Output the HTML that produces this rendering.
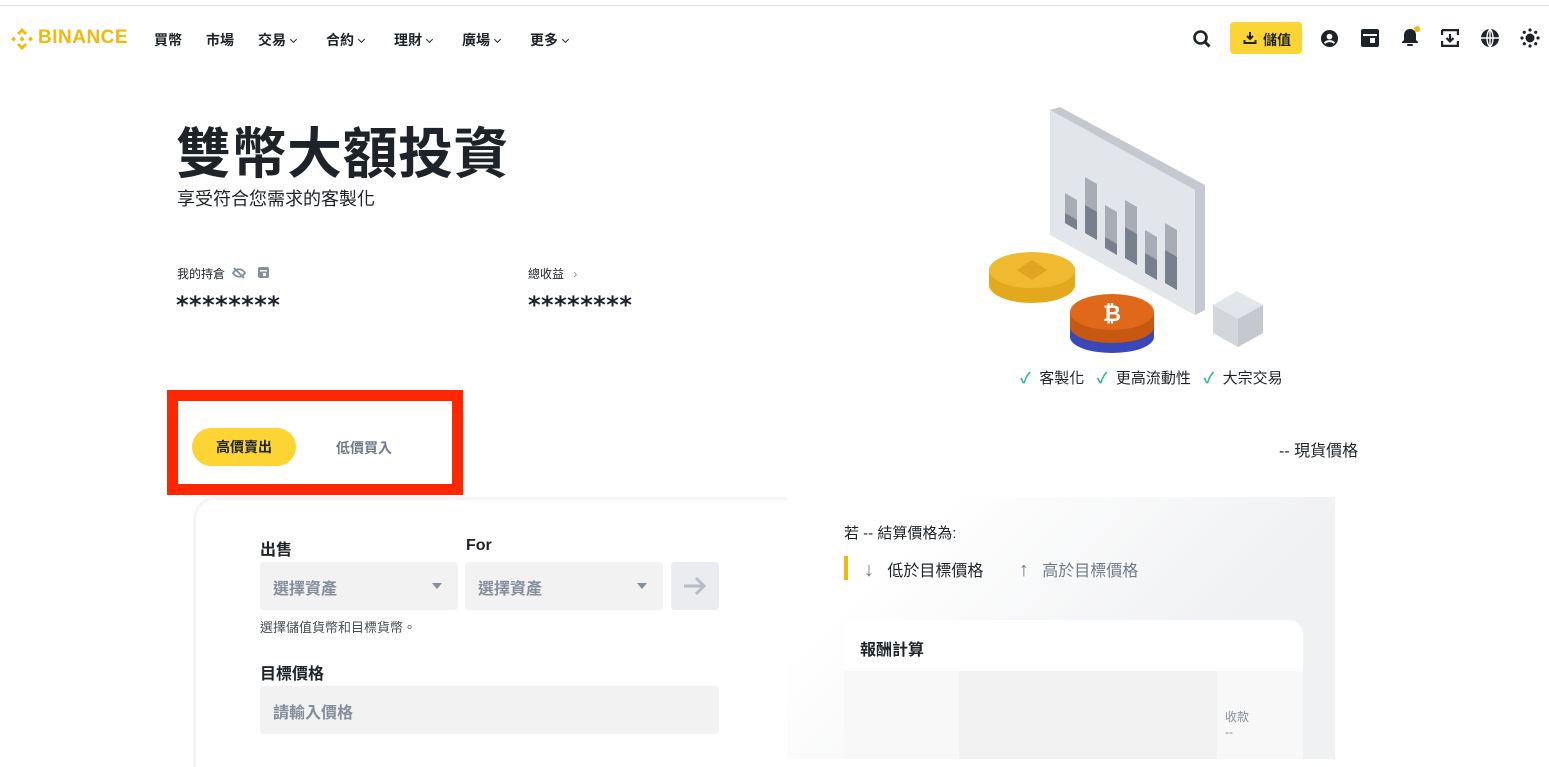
<!DOCTYPE html>
<html><head><meta charset="utf-8"><style>
*{margin:0;padding:0;box-sizing:border-box}
body{width:1549px;height:759px;overflow:hidden;background:#fff;font-family:"Liberation Sans","Noto Sans CJK TC",sans-serif;color:#1e2329;position:relative}
.a{position:absolute}
.nav span{position:absolute;top:30px;font-size:14px;font-weight:600;color:#1e2329}
.chev{display:inline-block;width:5px;height:5px;border-right:1.6px solid #1e2329;border-bottom:1.6px solid #1e2329;transform:rotate(45deg);margin-left:5px;vertical-align:3px}
.sel{position:absolute;background:#f2f2f2;border-radius:4px;height:48px;color:#848e9c;font-size:16px;font-weight:600;padding:13px 13px}
.tri{position:absolute;right:16px;top:21px;border-left:5px solid transparent;border-right:5px solid transparent;border-top:6px solid #848e9c}
.ck{color:#2ebd85;font-weight:700}
.ast{position:absolute;top:291px;font-family:"DejaVu Sans",sans-serif;font-size:24px;font-weight:700;letter-spacing:0.5px}
</style></head><body>
<div class="a" style="left:0;top:5px;width:1549px;height:1px;background:#e0e0e0"></div>
<svg class="a" style="left:9px;top:26px" width="26" height="26" viewBox="0 0 26 26"><g fill="#F0B90B"><path d="M13 2l5 5-2 2-3-3-3 3-2-2z"/><path d="M13 24l5-5-2-2-3 3-3-3-2 2z"/><path d="M2 13l2.5-2.5L7 13l-2.5 2.5z"/><path d="M19 13l2.5-2.5L24 13l-2.5 2.5z"/><path d="M13 10.5l2.5 2.5-2.5 2.5-2.5-2.5z"/></g></svg>
<div class="a" style="left:38px;top:27px;font-size:19px;font-weight:700;color:#F0B90B;letter-spacing:0.5px">BINANCE</div>
<div class="nav">
<span style="left:154px">買幣</span><span style="left:206px">市場</span><span style="left:258px">交易<i class="chev"></i></span><span style="left:326px">合約<i class="chev"></i></span><span style="left:394px">理財<i class="chev"></i></span><span style="left:462px">廣場<i class="chev"></i></span><span style="left:530px">更多<i class="chev"></i></span>
</div>
<svg class="a" style="left:1192px;top:29px" width="20" height="20" viewBox="0 0 20 20"><circle cx="8.5" cy="8.5" r="6" fill="none" stroke="#1e2329" stroke-width="2.6"/><path d="M13 13l4.5 4.5" stroke="#1e2329" stroke-width="3"/></svg>
<div class="a" style="left:1230px;top:22px;width:72px;height:32px;background:#fcd535;border-radius:4px;font-size:14px;font-weight:700;padding:8px 0 0 33px">儲值</div>
<svg class="a" style="left:1243px;top:31px" width="14" height="14" viewBox="0 0 14 14"><path d="M7 1v7M4 5l3 3 3-3M1.5 9v3h11V9" fill="none" stroke="#1e2329" stroke-width="2"/></svg>
<svg class="a" style="left:1320px;top:29px" width="19" height="19" viewBox="0 0 20 20"><circle cx="10" cy="10" r="9" fill="#1e2329"/><circle cx="10" cy="8" r="3" fill="#fff"/><path d="M5 15c2-3 8-3 10 0" stroke="#fff" stroke-width="2" fill="none"/></svg>
<svg class="a" style="left:1361px;top:29px" width="18" height="18" viewBox="0 0 18 18"><rect x="0" y="0" width="18" height="18" rx="2" fill="#1e2329"/><rect x="2" y="5" width="14" height="2" fill="#fff"/><rect x="9" y="9" width="5" height="5" fill="#fff"/></svg>
<svg class="a" style="left:1400px;top:26px" width="22" height="22" viewBox="0 0 22 22"><path d="M10 3c-4 0-6 3-6 6v5l-2 2v1h16v-1l-2-2V9c0-3-2-6-6-6z" fill="#1e2329"/><rect x="7" y="18" width="6" height="2" rx="1" fill="#1e2329"/><circle cx="17" cy="3" r="3" fill="#f0b90b"/></svg>
<svg class="a" style="left:1441px;top:29px" width="18" height="18" viewBox="0 0 18 18"><path d="M1 1h16v5M1 1v5M1 12v5h16v-5" fill="none" stroke="#1e2329" stroke-width="2.4"/><path d="M9 5v7M5.5 9L9 12.5 12.5 9" fill="none" stroke="#1e2329" stroke-width="2.2"/></svg>
<svg class="a" style="left:1480px;top:28px" width="20" height="20" viewBox="0 0 20 20"><circle cx="10" cy="10" r="9" fill="#1e2329"/><path d="M10 1v18M1 10h18M10 1c-4 4-4 14 0 18M10 1c4 4 4 14 0 18" stroke="#fff" stroke-width="1.4" fill="none"/></svg>
<svg class="a" style="left:1520px;top:28px" width="20" height="20" viewBox="0 0 20 20"><circle cx="10" cy="10" r="4.5" fill="#1e2329"/><g fill="#1e2329"><circle cx="10" cy="2" r="1.6"/><circle cx="10" cy="18" r="1.6"/><circle cx="2" cy="10" r="1.6"/><circle cx="18" cy="10" r="1.6"/><circle cx="4.3" cy="4.3" r="1.6"/><circle cx="15.7" cy="4.3" r="1.6"/><circle cx="4.3" cy="15.7" r="1.6"/><circle cx="15.7" cy="15.7" r="1.6"/></g></svg>

<div class="a" style="left:176px;top:109px;font-size:55px;font-weight:700;letter-spacing:0.5px">雙幣大額投資</div>
<div class="a" style="left:177px;top:185px;font-size:18px;color:#1e2329">享受符合您需求的客製化</div>
<div class="a" style="left:177px;top:265px;font-size:12px">我的持倉</div>
<svg class="a" style="left:232px;top:266px" width="14" height="14" viewBox="0 0 14 14"><path d="M1 7c3-5 9-5 12 0-3 5-9 5-12 0zM2 2l10 10" stroke="#848e9c" stroke-width="1.8" fill="none"/></svg>
<svg class="a" style="left:258px;top:267px" width="11" height="11"><rect width="11" height="11" rx="2" fill="#848e9c"/><rect x="2" y="3" width="7" height="1.5" fill="#fff"/><rect x="5" y="6" width="3" height="3" fill="#fff"/></svg>
<div class="ast" style="left:176px">********</div>
<div class="a" style="left:528px;top:265px;font-size:12px">總收益 <span style="color:#848e9c;margin-left:6px">›</span></div>
<div class="ast" style="left:528px">********</div>

<svg class="a" style="left:985px;top:105px" width="285" height="250" viewBox="0 0 285 250">
<polygon points="65,5 210,85 210,210 65,130" fill="#e2e5e9"/>
<polygon points="65,5 75,2 220,80 210,85" fill="#c5c9cf"/>
<polygon points="210,85 220,80 220,205 210,210" fill="#c5c9cf"/>
<g fill="#a8adb5"><polygon points="80,88 92,95 92,125 80,118"/><polygon points="100,72 112,79 112,135 100,128"/><polygon points="120,100 132,107 132,150 120,143"/><polygon points="140,95 152,102 152,160 140,153"/><polygon points="160,125 172,132 172,175 160,168"/><polygon points="180,118 192,125 192,185 180,178"/></g>
<g fill="#78808d"><polygon points="80,108 92,115 92,125 80,118"/><polygon points="100,100 112,107 112,135 100,128"/><polygon points="120,132 132,139 132,150 120,143"/><polygon points="140,122 152,129 152,160 140,153"/><polygon points="160,148 172,155 172,175 160,168"/><polygon points="180,145 192,152 192,185 180,178"/></g>
<polygon points="228,200 252,186 278,200 278,228 253,242 228,228" fill="#e2e5e9"/>
<polygon points="253,214 278,200 278,228 253,242" fill="#c5c9cf"/>
<polygon points="228,200 253,214 253,242 228,228" fill="#d3d6db"/>
<ellipse cx="47" cy="180" rx="43" ry="18" fill="#e3a91c"/><rect x="4" y="165" width="86" height="15" fill="#e3a91c"/><ellipse cx="47" cy="165" rx="43" ry="18" fill="#f0ba30"/>
<polygon points="47,155 62,165 47,175 32,165" fill="#e0a420"/>
<ellipse cx="127" cy="232" rx="42" ry="16" fill="#3848b8"/><rect x="85" y="215" width="84" height="17" fill="#3848b8"/>
<ellipse cx="127" cy="222" rx="42" ry="16" fill="#c8570f"/><rect x="85" y="208" width="84" height="14" fill="#c8570f"/><ellipse cx="127" cy="207" rx="42" ry="18" fill="#e0681a"/>
<text x="127" y="216" text-anchor="middle" font-size="22" font-weight="700" fill="#fff" font-family="Liberation Sans">₿</text>
</svg>
<div class="a" style="left:1020px;top:367px;font-size:15px"><span class="ck">✓</span>&nbsp; 客製化 &nbsp;&nbsp;<span class="ck">✓</span>&nbsp; 更高流動性 &nbsp;&nbsp;<span class="ck">✓</span>&nbsp; 大宗交易</div>

<div class="a" style="left:167px;top:390px;width:296px;height:105px;border:11px solid #ff2600"></div>
<div class="a" style="left:192px;top:428px;width:104px;height:38px;background:#fcd535;border-radius:19px;font-size:14px;font-weight:700;text-align:center;line-height:38px">高價賣出</div>
<div class="a" style="left:336px;top:438px;font-size:14px;font-weight:600;color:#707a8a">低價買入</div>
<div class="a" style="left:1279px;top:437px;font-size:16px">-- 現貨價格</div>

<div class="a" style="left:193px;top:497px;width:594px;height:270px;border:3px solid #f5f5f5;border-right:none;border-bottom:none;border-radius:22px 0 0 0;background:#fff"></div>
<div class="a" style="left:260px;top:536px;font-size:16px;font-weight:600">出售</div>
<div class="a" style="left:466px;top:537px;font-size:16px;font-weight:600">For</div>
<div class="sel" style="left:260px;top:562px;width:198px">選擇資產<i class="tri"></i></div>
<div class="sel" style="left:465px;top:562px;width:198px">選擇資產<i class="tri"></i></div>
<div class="a" style="left:671px;top:562px;width:48px;height:48px;background:#eaecef;border-radius:4px"></div>
<svg class="a" style="left:682px;top:575px" width="26" height="22" viewBox="0 0 26 22"><path d="M2 11h20M14 3l8 8-8 8" stroke="#b7bdc6" stroke-width="3" fill="none"/></svg>
<div class="a" style="left:260px;top:617px;font-size:13px;color:#474d57">選擇儲值貨幣和目標貨幣。</div>
<div class="a" style="left:260px;top:660px;font-size:16px;font-weight:600">目標價格</div>
<div class="sel" style="left:260px;top:686px;width:459px">請輸入價格</div>

<div class="a" style="left:787px;top:497px;width:548px;height:262px;background:linear-gradient(135deg,#fff 20%,#f0f1f3 70%)"></div>
<div class="a" style="left:844px;top:522px;font-size:15px">若 -- 結算價格為:</div>
<div class="a" style="left:844px;top:556px;width:4px;height:24px;background:#f0b90b"></div>
<div class="a" style="left:864px;top:557px;font-size:16px;color:#707a8a"><span style="font-size:20px">↓</span>&nbsp;&nbsp; <span style="color:#1e2329">低於目標價格</span>&nbsp;&nbsp;&nbsp;&nbsp;&nbsp;&nbsp;&nbsp; <span style="font-size:20px">↑</span>&nbsp;&nbsp; 高於目標價格</div>
<div class="a" style="left:844px;top:620px;width:459px;height:139px;background:#fff;border-radius:14px 14px 0 0;overflow:hidden">
<div class="a" style="left:16px;top:16px;font-size:16px;font-weight:700">報酬計算</div>
<div class="a" style="left:0;top:51px;width:115px;height:100px;background:#f8f8f8"></div>
<div class="a" style="left:115px;top:51px;width:258px;height:100px;background:#f2f2f2"></div>
<div class="a" style="left:373px;top:51px;width:86px;height:100px;background:#f8f8f8"></div>
<div class="a" style="left:381px;top:90px;font-size:12px;color:#848e9c;line-height:15px">收款<br>--</div>
</div>
</body></html>
